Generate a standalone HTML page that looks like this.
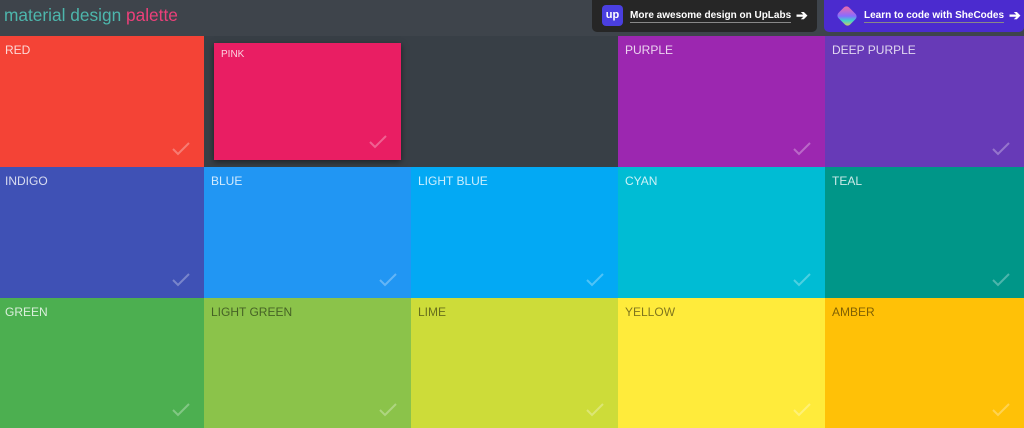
<!DOCTYPE html>
<html><head><style>
body{margin:0;width:1024px;height:428px;overflow:hidden;background:#383f46;font-family:"Liberation Sans",sans-serif;position:relative}
.hd{position:absolute;left:0;top:0;width:1024px;height:36px;background:#3e444b}
.t{position:absolute;left:4px;top:5px;font-size:17.3px;color:#4db6ac}
.t span{color:#ec407a}
.c{position:absolute;width:207px;height:131px}
.c b{position:absolute;left:7px;top:7px;font-weight:normal;font-size:12px;color:rgba(255,255,255,.8)}
.c.f b{left:5px}
.c.d b{color:rgba(0,0,0,.5)}
.c svg{position:absolute;right:14px;bottom:11px}
.btn{position:absolute;top:0;height:32px;border-radius:0 0 5px 5px;color:#fff;font-size:10px;font-weight:bold}
.btn i{position:absolute;font-style:normal}
.btn u{position:absolute;top:10px;text-decoration:none;border-bottom:1px solid #888;padding-bottom:1px}
</style></head><body>
<div class="hd"><div class="t">material design <span>palette</span></div></div>
<div class="btn" style="left:592px;width:225px;background:#262626">
<i style="left:10px;top:5px;width:21px;height:21px;background:#4a3fe0;border-radius:4px;font-size:11px;text-align:center;line-height:20px">up</i>
<u style="left:38px">More awesome design on UpLabs</u><i style="left:204px;top:7px;font-size:14px">➔</i></div>
<div class="btn" style="left:824px;width:200px;background:#4b2bcf">
<i style="left:12px;top:6px;width:22px;height:20px;background:linear-gradient(135deg,#ff6b9a,#8a6bff 50%,#3fd0d0 70%,#f6c544);border-radius:5px;transform:rotate(45deg) scale(.75)"></i>
<u style="left:40px">Learn to code with SheCodes</u><i style="left:185px;top:7px;font-size:14px">➔</i></div>
<div class="c f" style="left:0;top:36px;width:204px;background:#f44336"><b>RED</b></div>
<div class="c" style="left:214px;top:43px;width:187px;height:117px;background:#e91e63;box-shadow:0 2px 6px rgba(0,0,0,.5)"><b style="top:6px;left:7px;font-size:10px">PINK</b></div>
<div class="c" style="left:618px;top:36px;background:#9c27b0"><b>PURPLE</b></div>
<div class="c" style="left:825px;top:36px;width:199px;background:#673ab7"><b>DEEP PURPLE</b></div>
<div class="c f" style="left:0;top:167px;width:204px;background:#3f51b5"><b>INDIGO</b></div>
<div class="c" style="left:204px;top:167px;background:#2196f3"><b>BLUE</b></div>
<div class="c" style="left:411px;top:167px;background:#03a9f4"><b>LIGHT BLUE</b></div>
<div class="c" style="left:618px;top:167px;background:#00bcd4"><b>CYAN</b></div>
<div class="c" style="left:825px;top:167px;width:199px;background:#009688"><b>TEAL</b></div>
<div class="c f" style="left:0;top:298px;width:204px;height:130px;background:#4caf50"><b>GREEN</b></div>
<div class="c d" style="left:204px;top:298px;height:130px;background:#8bc34a"><b>LIGHT GREEN</b></div>
<div class="c d" style="left:411px;top:298px;height:130px;background:#cddc39"><b>LIME</b></div>
<div class="c d" style="left:618px;top:298px;height:130px;background:#ffeb3b"><b>YELLOW</b></div>
<div class="c d" style="left:825px;top:298px;width:199px;height:130px;background:#ffc107"><b>AMBER</b></div>
<script>
document.querySelectorAll('.c').forEach(function(e){e.insertAdjacentHTML('beforeend','<svg width="18" height="14" viewBox="0 0 18 14"><path d="M1 7l5 5L17 1" fill="none" stroke="rgba(255,255,255,.3)" stroke-width="2"/></svg>')});
</script>
</body></html>
